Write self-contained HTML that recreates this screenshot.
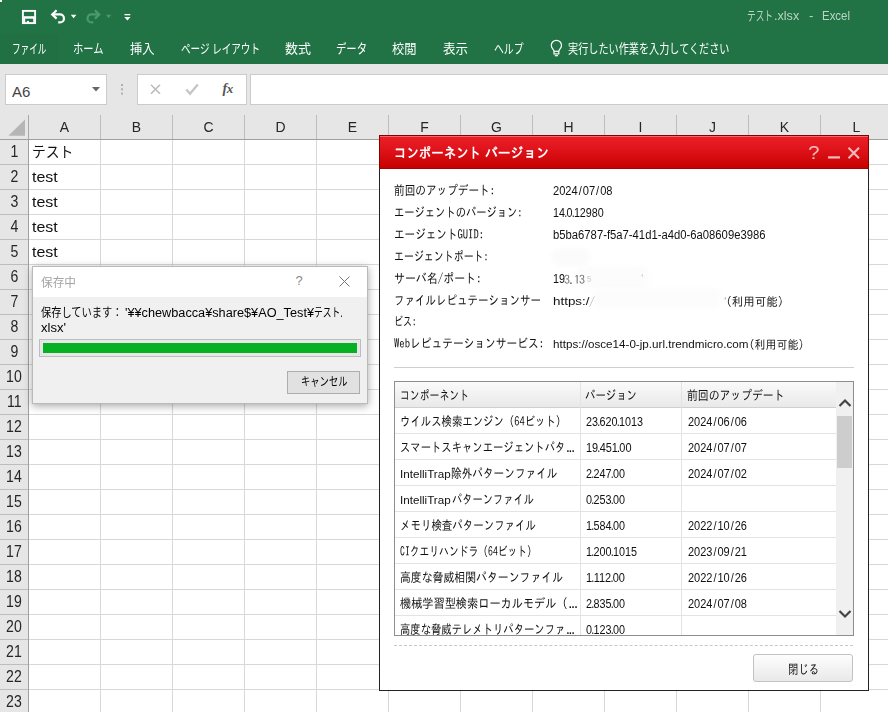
<!DOCTYPE html>
<html lang="ja">
<head>
<meta charset="utf-8">
<title>テスト.xlsx - Excel</title>
<style>
*{box-sizing:border-box;margin:0;padding:0}
html,body{width:888px;height:712px;overflow:hidden;background:#fff}
body{position:relative;font-family:"Liberation Sans","Noto Sans CJK JP",sans-serif;color:#222}
.abs{position:absolute}
span,div{white-space:nowrap}
#titlebar{left:0;top:0;width:888px;height:64px;background:#217346}
#filetab{left:0;top:34px;width:59px;height:30px;background:#207044}
.tab{position:absolute;top:39px;height:20px;line-height:20px;color:#fff;font-size:13px;transform-origin:0 50%}
.wt{position:absolute;top:6px;height:20px;line-height:20px;font-size:13px;color:#b9d5c5;transform-origin:0 50%}
#fbar{left:0;top:64px;width:888px;height:50px;background:#e6e6e6}
.box{position:absolute;background:#fff;border:1px solid #cbcbcb}
#colhead{left:0;top:114px;width:888px;height:26px;background:#e6e6e6;border-bottom:1px solid #9f9f9f}
.ch{position:absolute;top:0;height:25px;line-height:25px;text-align:center;font-size:15.5px;color:#262626;transform:scaleX(.9)}
.chs{position:absolute;top:1px;width:1px;height:24px;background:#bdbdbd}
#rowhead{left:0;top:140px;width:29px;height:572px;background:#e6e6e6;border-right:1px solid #9f9f9f}
.rh{position:absolute;left:0;width:28px;height:25px;line-height:23px;text-align:center;font-size:16px;color:#262626;border-bottom:1px solid #bdbdbd}
.rh b{display:inline-block;font-weight:normal;transform:scaleX(.88)}
#grid{left:29px;top:140px;width:859px;height:572px;
 background-image:linear-gradient(to right,transparent 71px,#d8d8d8 71px),linear-gradient(to bottom,transparent 24px,#d8d8d8 24px);
 background-size:72px 25px,72px 25px}
.cell{position:absolute;left:31px;height:25px;line-height:23px;font-size:15px;color:#111;transform-origin:0 50%}
/* save dialog */
#sdlg{left:32px;top:266px;width:336px;height:138px;background:#f0f0f0;border:1px solid #b9b9b9;box-shadow:0 2px 8px rgba(0,0,0,.35)}
#sdlg .tb{position:absolute;left:0;top:0;width:334px;height:30px;background:#fff}
#sdlg .tt{position:absolute;left:9px;top:5.500px;height:20px;line-height:20px;font-size:12px;color:#a4a4a4;transform-origin:0 50%}
#sdlg .sm{position:absolute;font-size:12px;line-height:15px;height:15px;color:#000;transform-origin:0 50%}
#sdlg .pb{position:absolute;left:6px;top:72px;width:322px;height:18px;background:#e6e6e6;border:1px solid #bcbcbc}
#sdlg .pb i{position:absolute;left:3px;top:3px;width:314px;height:10px;background:#06b025}
#sdlg .btn{position:absolute;left:254px;top:104px;width:73px;height:23px;background:#e1e1e1;border:1px solid #adadad;font-size:12px;line-height:21px;text-align:center;color:#000}
/* trend dialog */
#tdlg{left:379px;top:135px;width:490px;height:556px;background:#fff;border:1px solid #222}
#tdlg .hd{position:absolute;left:-1px;top:-1px;width:490px;height:34px;background:linear-gradient(#ec1f27,#e0141c 40%,#c60000);border:1px solid #850000;border-bottom-color:#a80000;box-shadow:inset 0 1px 0 rgba(255,255,255,.32)}
#tdlg .ht{position:absolute;left:14px;top:7px;height:20px;line-height:20px;font-size:14px;font-weight:bold;color:#fff;font-family:"IPAGothic","Noto Sans CJK JP",sans-serif;transform-origin:0 50%}
.g{font-family:"IPAGothic","Liberation Sans",sans-serif;font-size:12px;color:#111}
.el{letter-spacing:-3.2px;margin-left:1px}
.nu{font-family:"Liberation Sans",sans-serif;font-size:12.5px}
.dt{margin:0 -.9px}
.sl{margin:0 1.1px}
.la{font-family:"Liberation Sans",sans-serif;font-size:11.5px}
.lb{position:absolute;left:14px;height:16px;line-height:16px;transform-origin:0 50%;font-size:13px}
.k{font-size:13px}
.vl{position:absolute;left:172px;height:16px;line-height:16px;transform-origin:0 50%}
#tdlg .sep{position:absolute;left:14px;top:231px;width:460px;height:1px;background:#cfcfcf}
#tbl{position:absolute;left:14px;top:245px;width:460px;height:255px;border:1px solid #8e8e8e;background:#fff;overflow:hidden}
#tbl .th{position:absolute;left:0;top:0;width:441px;height:26px;background:linear-gradient(#fafafa,#e9e9e9);border-bottom:1px solid #cfcfcf}
#tbl .rl{position:absolute;left:0;width:441px;height:1px;background:#e3e3e3}
#tbl .cl{position:absolute;top:0;width:1px;height:255px;background:#e3e3e3}
#tbl .t{position:absolute;height:16px;line-height:16px;transform-origin:0 50%}
#tbl .sb{position:absolute;left:441px;top:0;width:17px;height:253px;background:#f0f0f0}
#tbl .thumb{position:absolute;left:442px;top:34px;width:15px;height:52px;background:#cdcdcd}
#tdlg .dash{position:absolute;left:14px;top:509px;width:459px;height:0;border-top:1px dashed #c8c8c8}
#tdlg .cbtn{position:absolute;left:373px;top:518px;width:100px;height:28px;border:1px solid #c2c2c2;border-radius:3px;background:linear-gradient(#fdfdfd,#e9e9e9);text-align:center;line-height:26px}
</style>
</head>
<body>
<div id="titlebar" class="abs"></div>
<div id="filetab" class="abs"></div>
<svg class="abs" style="left:0;top:0" width="160" height="34" viewBox="0 0 160 34">
<rect x="0" y="0" width="2" height="2" fill="#fff"/>
<rect x="22.9" y="10.9" width="12.2" height="12.2" fill="none" stroke="#fff" stroke-width="1.900"/>
<rect x="23.500" y="16.200" width="11" height="2.500" fill="#fff"/>
<rect x="23.500" y="18" width="1.700" height="4.500" fill="#fff"/><rect x="33.200" y="18" width="1.500" height="4.500" fill="#fff"/>
<rect x="26.800" y="20.900" width="2.200" height="2" fill="#fff"/>
<path d="M52.300 14.400h7.700a4 4 0 0 1 0 8h-1.800" fill="none" stroke="#fff" stroke-width="2.200"/>
<path d="M56.600 10.200l-4.400 4.200 4.400 4.200" fill="none" stroke="#fff" stroke-width="2.200"/>
<path d="M70.800 14.800h5.600l-2.800 3.400z" fill="#fff"/>
<g stroke="#4f9770" fill="none" stroke-width="2.200">
<path d="M99.200 14.400h-7.700a4 4 0 0 0 0 8h1.800"/>
<path d="M94.900 10.200l4.400 4.200-4.400 4.200"/>
</g>
<path d="M106 14.800h5.200l-2.600 3.400z" fill="#4f9770"/>
<rect x="124.500" y="14" width="5.800" height="1.300" fill="#fff"/>
<path d="M124.300 17h6.200l-3.100 3.400z" fill="#fff"/>
</svg>
<div class="tab" id="tab0" style="left:11px;margin-left:0.5px;transform:scaleX(0.6633)">ファイル</div>
<div class="tab" id="tab1" style="left:72px;margin-left:0.5px;transform:scaleX(0.7896)">ホーム</div>
<div class="tab" id="tab2" style="left:129px;margin-left:1px;transform:scaleX(0.9417)">挿入</div>
<div class="tab" id="tab3" style="left:180px;margin-left:0.5px;transform:scaleX(0.7358)">ページ レイアウト</div>
<div class="tab" id="tab4" style="left:285px;margin-left:0px;transform:scaleX(0.9994)">数式</div>
<div class="tab" id="tab5" style="left:336px;margin-left:0px;transform:scaleX(0.7946)">データ</div>
<div class="tab" id="tab6" style="left:392px;margin-left:-0.5px;transform:scaleX(0.9417)">校閲</div>
<div class="tab" id="tab7" style="left:442px;margin-left:0.5px;transform:scaleX(0.961)">表示</div>
<div class="tab" id="tab8" style="left:493px;margin-left:1px;transform:scaleX(0.7561)">ヘルプ</div>
<div class="tab" id="tab9" style="left:567px;margin-left:0.5px;transform:scaleX(0.7793)">実行したい作業を入力してください</div>
<svg class="abs" style="left:548px;top:38px" width="18" height="20" viewBox="0 0 18 20"><g fill="none" stroke="#fff" stroke-width="1.200"><path d="M6 13.300c0-1.800-2.700-3-2.700-5.900a5.100 5.100 0 0 1 10.200 0c0 2.900-2.700 4.100-2.700 5.900"/><rect x="6" y="13.300" width="4.800" height="2.600"/><path d="M6.800 17.700h3.200"/></g></svg>
<div class="wt" id="wt0" style="left:747px;margin-left:0px;transform:scaleX(0.6664)">テスト</div>
<div class="wt" id="wt1" style="left:774px;margin-left:0.3px;transform:scaleX(0.9692)">.xlsx</div>
<div class="wt" id="wt2" style="left:808.5px;margin-left:0.1px;transform:scaleX(1.0129)">-</div>
<div class="wt" id="wt3" style="left:822px;margin-left:0px;transform:scaleX(0.8806)">Excel</div>
<div id="fbar" class="abs"></div>
<div class="box" style="left:5px;top:74px;width:102px;height:31px"></div>
<div class="abs" style="left:12px;top:81.500px;font-size:15px;line-height:20px;color:#444">A6</div>
<svg class="abs" style="left:90px;top:85px" width="12" height="8"><path d="M2 2h8l-4 4.500z" fill="#666"/></svg>
<svg class="abs" style="left:120px;top:82px" width="4" height="14"><g fill="#b0b0b0"><rect x="1" y="2" width="2" height="2"/><rect x="1" y="6.300" width="2" height="2"/><rect x="1" y="10.600" width="2" height="2"/></g></svg>
<div class="box" style="left:137px;top:74px;width:110px;height:31px"></div>
<svg class="abs" style="left:137px;top:74px" width="110" height="31" viewBox="0 0 110 31">
<path d="M14 10.700l9 9M23 10.700l-9 9" stroke="#bcbcbc" stroke-width="1.600" fill="none"/>
<path d="M49.300 15.500l3.700 4.200 7.800-9.200" stroke="#c6c6c6" stroke-width="2.400" fill="none"/>
<text x="85.500" y="18.600" font-family="Liberation Serif,serif" font-style="italic" font-weight="bold" font-size="14" fill="#555">f</text>
<text x="89.800" y="18.800" font-family="Liberation Serif,serif" font-style="italic" font-weight="bold" font-size="13" fill="#555">x</text>
</svg>
<div class="box" style="left:250px;top:74px;width:640px;height:31px"></div>
<div id="colhead" class="abs">
<svg class="abs" style="left:8px;top:5px" width="18" height="18"><path d="M17 .4v16.300H.4z" fill="#b5b5b5"/></svg>
<i class="chs" style="left:28px;background:#a8a8a8"></i>
<div class="ch" style="left:29px;width:71px">A</div><i class="chs" style="left:100px"></i>
<div class="ch" style="left:101px;width:71px">B</div><i class="chs" style="left:172px"></i>
<div class="ch" style="left:173px;width:71px">C</div><i class="chs" style="left:244px"></i>
<div class="ch" style="left:245px;width:71px">D</div><i class="chs" style="left:316px"></i>
<div class="ch" style="left:317px;width:71px">E</div><i class="chs" style="left:388px"></i>
<div class="ch" style="left:389px;width:71px">F</div><i class="chs" style="left:460px"></i>
<div class="ch" style="left:461px;width:71px">G</div><i class="chs" style="left:532px"></i>
<div class="ch" style="left:533px;width:71px">H</div><i class="chs" style="left:604px"></i>
<div class="ch" style="left:605px;width:71px">I</div><i class="chs" style="left:676px"></i>
<div class="ch" style="left:677px;width:71px">J</div><i class="chs" style="left:748px"></i>
<div class="ch" style="left:749px;width:71px">K</div><i class="chs" style="left:820px"></i>
<div class="ch" style="left:821px;width:71px">L</div><i class="chs" style="left:892px"></i>
</div>
<div id="rowhead" class="abs">
<div class="rh" style="top:0px"><b>1</b></div>
<div class="rh" style="top:25px"><b>2</b></div>
<div class="rh" style="top:50px"><b>3</b></div>
<div class="rh" style="top:75px"><b>4</b></div>
<div class="rh" style="top:100px"><b>5</b></div>
<div class="rh" style="top:125px"><b>6</b></div>
<div class="rh" style="top:150px"><b>7</b></div>
<div class="rh" style="top:175px"><b>8</b></div>
<div class="rh" style="top:200px"><b>9</b></div>
<div class="rh" style="top:225px"><b>10</b></div>
<div class="rh" style="top:250px"><b>11</b></div>
<div class="rh" style="top:275px"><b>12</b></div>
<div class="rh" style="top:300px"><b>13</b></div>
<div class="rh" style="top:325px"><b>14</b></div>
<div class="rh" style="top:350px"><b>15</b></div>
<div class="rh" style="top:375px"><b>16</b></div>
<div class="rh" style="top:400px"><b>17</b></div>
<div class="rh" style="top:425px"><b>18</b></div>
<div class="rh" style="top:450px"><b>19</b></div>
<div class="rh" style="top:475px"><b>20</b></div>
<div class="rh" style="top:500px"><b>21</b></div>
<div class="rh" style="top:525px"><b>22</b></div>
<div class="rh" style="top:550px"><b>23</b></div>
</div>
<div id="grid" class="abs"></div>
<div class="cell" id="c0" style="top:140px;margin-left:1px;transform:scaleX(0.9175)">テスト</div>
<div class="cell" id="c1" style="top:165px;margin-left:0.5px;transform:scaleX(1.0667)">test</div>
<div class="cell" id="c2" style="top:190px;margin-left:0.5px;transform:scaleX(1.0667)">test</div>
<div class="cell" id="c3" style="top:215px;margin-left:0.5px;transform:scaleX(1.0667)">test</div>
<div class="cell" id="c4" style="top:240px;margin-left:0.5px;transform:scaleX(1.0667)">test</div>
<div id="sdlg" class="abs"><div class="tb"></div><div class="tt" id="stt" style="margin-left:-1px;transform:scaleX(0.9718)">保存中</div>
<div class="abs" style="left:262.5px;top:4px;font-size:13px;line-height:20px;color:#888">?</div>
<svg class="abs" style="left:305px;top:8px" width="13" height="13"><path d="M1.500 1.500l10 10M11.500 1.500L1.500 11.500" stroke="#777" stroke-width="1" fill="none"/></svg>
<div class="sm" id="sm0" style="left:8px;top:39px;margin-left:-0.5px;transform:scaleX(0.852)">保存しています：</div>
<div class="sm" id="sm1" style="left:92px;top:39px;margin-left:-0.5px;transform:scaleX(1.0594)">&#39;¥¥chewbacca¥share$¥AO_Test¥</div>
<div class="sm" id="sm2" style="left:281px;top:39px;margin-left:-0.2px;transform:scaleX(0.7295)">テスト.</div>
<div class="sm" id="sm3" style="left:8px;top:53.5px;margin-left:-0.5px;transform:scaleX(1.0884)">xlsx&#39;</div>
<div class="pb"><i></i></div><div class="btn"></div><div class="sm" id="sbtn" style="left:268px;top:108px;margin-left:-0.5px;transform:scaleX(0.7748)">キャンセル</div></div>
<div id="tdlg" class="abs g"><div class="hd"></div><div class="ht" id="ht0" style="margin-left:-0.5px;transform:scaleX(0.8878)">コンポーネント</div><div class="ht" id="ht1" style="left:105px;margin-left:-0.5px;transform:scaleX(0.9143)">バージョン</div>
<svg class="abs" style="left:425px;top:8px" width="60" height="20" viewBox="0 0 60 20">
<text transform="translate(3.300 15) scale(1.150 1)" font-family="Liberation Sans,sans-serif" font-size="17.500" fill="#f6b9bb">?</text>
<rect x="23" y="12.300" width="12" height="2.200" fill="#f6b9bb"/>
<path d="M43.500 3.700l10.500 10.500M54 3.700L43.500 14.200" stroke="#f6b9bb" stroke-width="2.100" fill="none"/>
</svg>
<div class="lb" id="lb0" style="top:47px;margin-left:-0.5px;transform:scaleX(0.8178)">前回のアップデート:</div>
<div class="vl nu" id="vl0" style="top:47px;margin-left:0.5px;transform:scaleX(0.8885)">2024<span class="sl">/</span>07<span class="sl">/</span>08</div>
<div class="lb" id="lb1" style="top:69px;margin-left:-0.5px;transform:scaleX(0.7908)">エージェントのバージョン:</div>
<div class="vl nu" id="vl1" style="top:69px;margin-left:0.5px;transform:scaleX(0.8606)">14<span class="dt">.</span>0<span class="dt">.</span>12980</div>
<div class="lb" id="lb2" style="top:91px;margin-left:-0.5px;transform:scaleX(0.8145)">エージェントGUID:</div>
<div class="vl nu" id="vl2" style="top:91px;margin-left:0.5px;transform:scaleX(0.9018)">b5ba6787-f5a7-41d1-a4d0-6a08609e3986</div>
<div class="lb" id="lb3" style="top:113px;margin-left:-0.5px;transform:scaleX(0.7652)">エージェントポート:</div>
<div class="lb" id="lb4" style="top:135px;margin-left:-0.5px;transform:scaleX(0.8413)">サーバ名/ポート:</div>
<div class="vl nu" id="vl4" style="top:135px;margin-left:0.5px;transform:scaleX(0.8629)">19</div>
<div class="lb" id="lb5" style="top:157px;margin-left:-0.5px;transform:scaleX(0.8077)">ファイルレピュテーションサー</div>
<div class="vl la" id="vl5" style="top:157px;margin-left:0.5px;transform:scaleX(1.1651)">https:/</div>
<div class="lb" id="lb6" style="top:178px;margin-left:-0.5px;transform:scaleX(0.6923)">ビス:</div>
<div class="lb" id="lb7" style="top:200px;margin-left:-0.5px;transform:scaleX(0.8242)">Webレピュテーションサービス:</div>
<div class="vl la" id="vl7" style="top:200px;margin-left:0.5px;transform:scaleX(1.0128)">https://osce14-0-jp.url.trendmicro.com</div>
<div class="vl" id="vly" style="left:368px;top:200px;margin-left:0.6px;transform:scaleX(0.915)">(利用可能)</div>
<div class="abs" style="left:171px;top:112px;width:40px;height:18px;border-radius:9px;background:#fbfbfb;filter:blur(2px)"></div>
<div class="abs" style="left:195px;top:130px;width:75px;height:22px;border-radius:10px;background:#fcfcfc;filter:blur(2px)"></div>
<div class="abs" style="left:212px;top:152px;width:130px;height:20px;border-radius:10px;background:#fcfcfc;filter:blur(2px)"></div>
<div class="vl" style="left:184px;top:135px;color:#444;filter:blur(.7px);opacity:.8;letter-spacing:-1px">3.13</div>
<div class="vl" style="left:207px;top:135px;color:#bbb;filter:blur(.6px);font-size:8px">5</div>
<div class="vl" style="left:261px;top:135px;color:#bbb;filter:blur(.5px);font-size:9px">&#39;</div>
<div class="vl" style="left:209px;top:157px;color:#aaa;filter:blur(.6px)">/</div>
<div class="vl" style="left:344px;top:158px;color:#999;filter:blur(.4px);font-size:9px">&#39;</div>
<div class="vl" id="vlx" style="left:346px;top:157px;margin-left:-0.5px;transform:scaleX(0.9583)">(利用可能)</div>
<div class="sep"></div>
<div id="tbl"><div class="th"></div>
<i class="rl" style="top:51px"></i>
<i class="rl" style="top:77px"></i>
<i class="rl" style="top:103px"></i>
<i class="rl" style="top:129px"></i>
<i class="rl" style="top:155px"></i>
<i class="rl" style="top:181px"></i>
<i class="rl" style="top:207px"></i>
<i class="rl" style="top:233px"></i>
<i class="rl" style="top:259px"></i>
<i class="cl" style="left:185px"></i><i class="cl" style="left:286px"></i>
<div class="t k" id="ta0" style="left:5px;top:5.5px;margin-left:-0.5px;transform:scaleX(0.7582)">コンポーネント</div>
<div class="t k" id="tb0" style="left:191px;top:5.5px;margin-left:-1px;transform:scaleX(0.8)">バージョン</div>
<div class="t k" id="tc0" style="left:292px;top:5.5px;margin-left:0px;transform:scaleX(0.8333)">前回のアップデート</div>
<div class="t k" id="ta1" style="left:5px;top:31.5px;margin-left:-0.5px;transform:scaleX(0.799)">ウイルス検索エンジン (64ビット)</div>
<div class="t nu" id="tb1" style="left:191px;top:31.5px;margin-left:-0.5px;transform:scaleX(0.8638)">23<span class="dt">.</span>620<span class="dt">.</span>1013</div>
<div class="t nu" id="tc1" style="left:292px;top:31.5px;margin-left:0.5px;transform:scaleX(0.881)">2024<span class="sl">/</span>06<span class="sl">/</span>06</div>
<div class="t k" id="ta2" style="left:5px;top:57.5px;margin-left:-0.5px;transform:scaleX(0.7949)">スマートスキャンエージェントパタ<span class="el">...</span></div>
<div class="t nu" id="tb2" style="left:191px;top:57.5px;margin-left:-0.5px;transform:scaleX(0.8737)">19<span class="dt">.</span>451<span class="dt">.</span>00</div>
<div class="t nu" id="tc2" style="left:292px;top:57.5px;margin-left:0.5px;transform:scaleX(0.881)">2024<span class="sl">/</span>07<span class="sl">/</span>07</div>
<div class="t la" id="ta3" style="left:5px;top:83.5px;margin-left:-0.2px;transform:scaleX(1.0124)">IntelliTrap</div>
<div class="t k" id="tz3" style="left:56px;top:83.5px;margin-left:0px;transform:scaleX(0.8192)">除外パターンファイル</div>
<div class="t nu" id="tb3" style="left:191px;top:83.5px;margin-left:-0.5px;transform:scaleX(0.8643)">2<span class="dt">.</span>247<span class="dt">.</span>00</div>
<div class="t nu" id="tc3" style="left:292px;top:83.5px;margin-left:0.5px;transform:scaleX(0.881)">2024<span class="sl">/</span>07<span class="sl">/</span>02</div>
<div class="t la" id="ta4" style="left:5px;top:109.5px;margin-left:-0.2px;transform:scaleX(1.0124)">IntelliTrap</div>
<div class="t k" id="tz4" style="left:56px;top:109.5px;margin-left:1px;transform:scaleX(0.7885)">パターンファイル</div>
<div class="t nu" id="tb4" style="left:191px;top:109.5px;margin-left:-0.5px;transform:scaleX(0.8643)">0<span class="dt">.</span>253<span class="dt">.</span>00</div>
<div class="t k" id="ta5" style="left:5px;top:135.5px;margin-left:-0.5px;transform:scaleX(0.8047)">メモリ検査パターンファイル</div>
<div class="t nu" id="tb5" style="left:191px;top:135.5px;margin-left:-0.5px;transform:scaleX(0.8643)">1<span class="dt">.</span>584<span class="dt">.</span>00</div>
<div class="t nu" id="tc5" style="left:292px;top:135.5px;margin-left:0.5px;transform:scaleX(0.881)">2022<span class="sl">/</span>10<span class="sl">/</span>26</div>
<div class="t k" id="ta6" style="left:5px;top:161.5px;margin-left:-0.5px;transform:scaleX(0.7521)">CIクエリハンドラ (64ビット)</div>
<div class="t nu" id="tb6" style="left:191px;top:161.5px;margin-left:-0.5px;transform:scaleX(0.8639)">1<span class="dt">.</span>200<span class="dt">.</span>1015</div>
<div class="t nu" id="tc6" style="left:292px;top:161.5px;margin-left:0.5px;transform:scaleX(0.881)">2023<span class="sl">/</span>09<span class="sl">/</span>21</div>
<div class="t k" id="ta7" style="left:5px;top:187.5px;margin-left:-0.5px;transform:scaleX(0.8359)">高度な脅威相関パターンファイル</div>
<div class="t nu" id="tb7" style="left:191px;top:187.5px;margin-left:-0.5px;transform:scaleX(0.8823)">1<span class="dt">.</span>112<span class="dt">.</span>00</div>
<div class="t nu" id="tc7" style="left:292px;top:187.5px;margin-left:0.5px;transform:scaleX(0.881)">2022<span class="sl">/</span>10<span class="sl">/</span>26</div>
<div class="t k" id="ta8" style="left:5px;top:213.5px;margin-left:-0.5px;transform:scaleX(0.8596)">機械学習型検索ローカルモデル (<span class="el">...</span></div>
<div class="t nu" id="tb8" style="left:191px;top:213.5px;margin-left:-0.5px;transform:scaleX(0.8643)">2<span class="dt">.</span>835<span class="dt">.</span>00</div>
<div class="t nu" id="tc8" style="left:292px;top:213.5px;margin-left:0.5px;transform:scaleX(0.881)">2024<span class="sl">/</span>07<span class="sl">/</span>08</div>
<div class="t k" id="ta9" style="left:5px;top:239.5px;margin-left:-0.5px;transform:scaleX(0.7949)">高度な脅威テレメトリパターンファ<span class="el">...</span></div>
<div class="t nu" id="tb9" style="left:191px;top:239.5px;margin-left:-0.5px;transform:scaleX(0.8643)">0<span class="dt">.</span>123<span class="dt">.</span>00</div>
<div class="sb"></div><div class="thumb"></div>
<svg class="abs" style="left:443px;top:15.5px" width="14" height="10"><path d="M1.500 8l5.500-5.500 5.500 5.500" stroke="#444" stroke-width="2.200" fill="none"/></svg>
<svg class="abs" style="left:443px;top:226.5px" width="14" height="10"><path d="M1.500 2l5.500 5.500 5.500-5.500" stroke="#444" stroke-width="2.200" fill="none"/></svg>
</div>
<div class="dash"></div><div class="cbtn"></div><div class="lb k" id="cbt" style="left:408px;top:525.5px;margin-left:-0.5px;transform:scaleX(0.7949)">閉じる</div>
</div>
</body>
</html>
